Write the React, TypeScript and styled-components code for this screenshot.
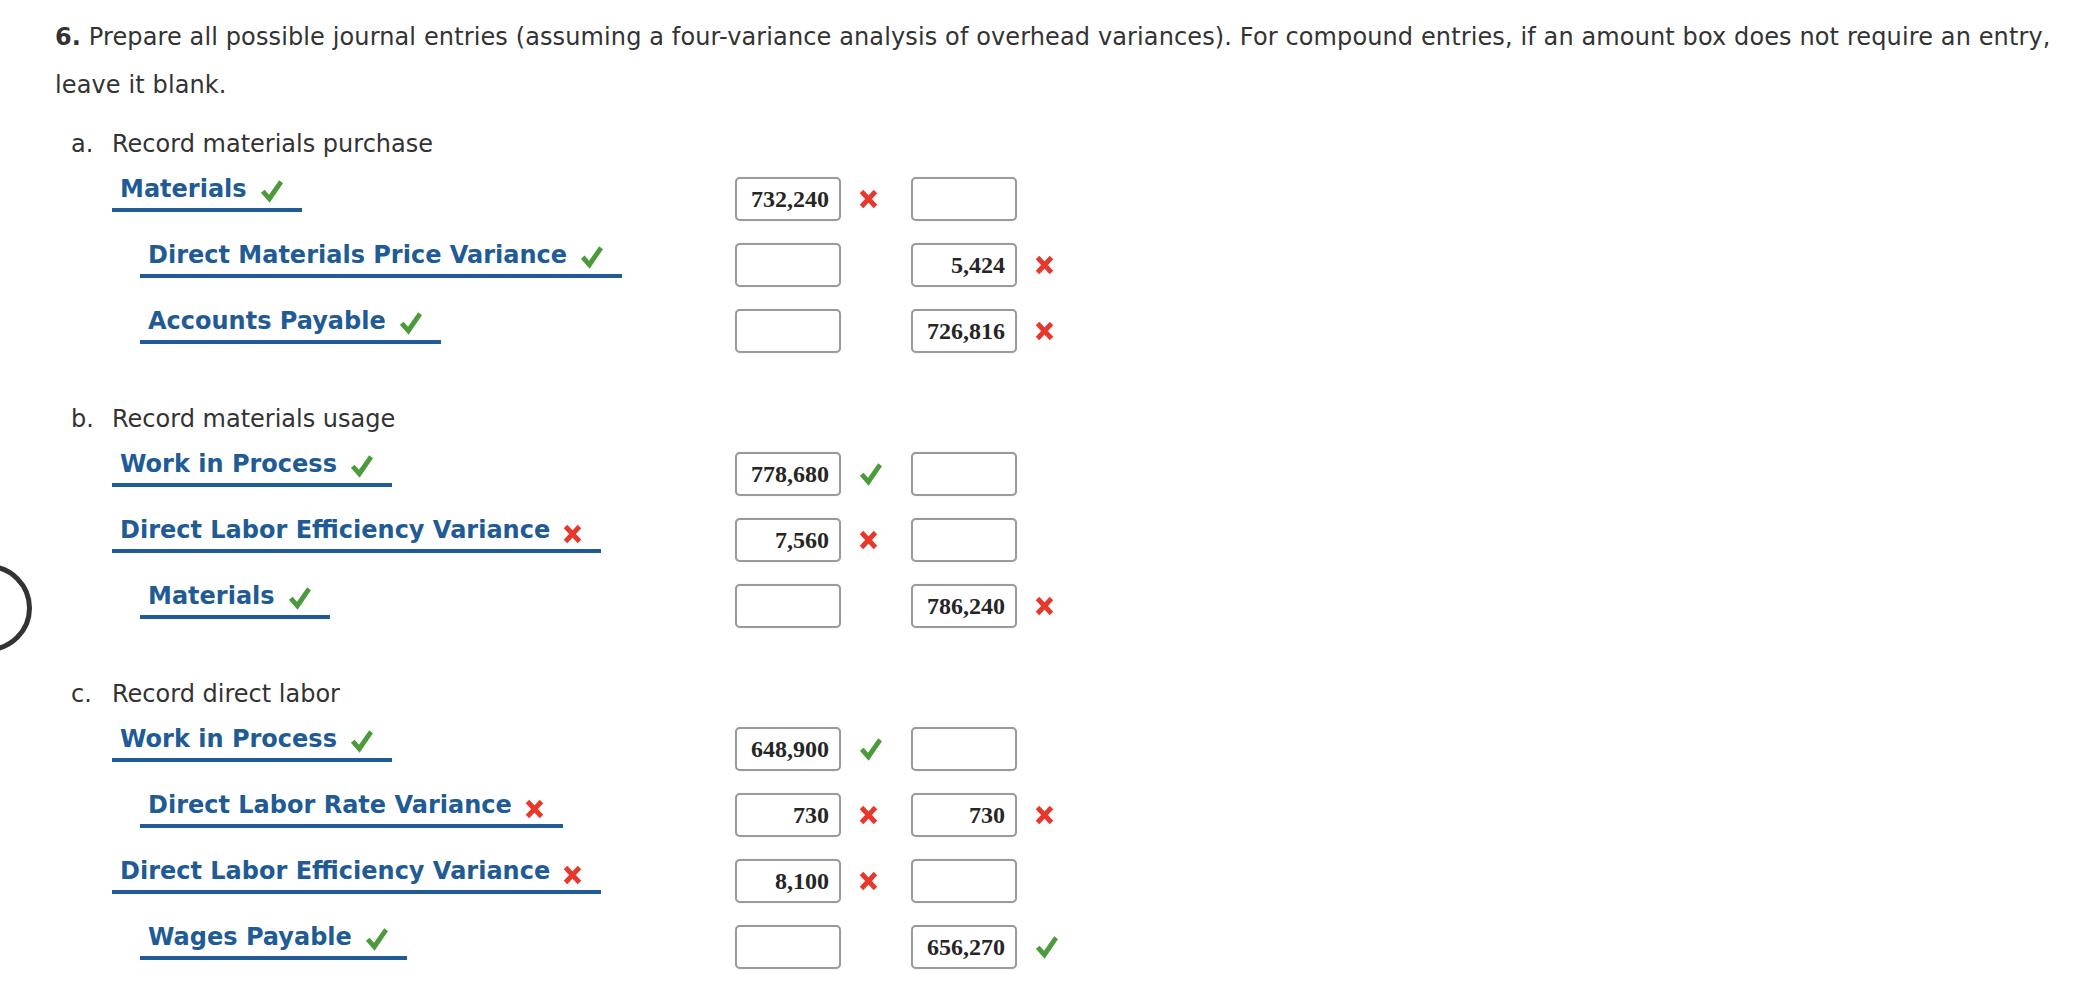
import React from 'react';
import styled, { createGlobalStyle } from 'styled-components';

const Global = createGlobalStyle`
  html, body { margin: 0; padding: 0; background: #fff; }
  body { font-family: "DejaVu Sans", Verdana, sans-serif; color: #333; }
`;

const Page = styled.div`
  position: relative;
  box-sizing: border-box;
  min-height: 992px;
  padding: 13px 30px 0 55px;
  overflow: hidden;
`;

const Prompt = styled.p`
  margin: 0;
  max-width: 2000px;
  font-size: 24px;
  line-height: 48px;
  letter-spacing: 0.12px;
  color: #333;
`;

const Num = styled.b`
  color: #333;
`;

const Section = styled.section`
  margin-top: 20px;
  padding-left: 16px;
  & + & { margin-top: 32px; }
`;

const SectionHead = styled.div`
  display: flex;
  font-size: 24px;
  line-height: 30px;
  color: #333;
`;

const Marker = styled.span`
  width: 41px;
  flex-shrink: 0;
`;

const Rows = styled.div`
  margin: 15px 0 0 41px;
`;

const Row = styled.div`
  display: flex;
  align-items: flex-start;
  height: 66px;
`;

const LabelCell = styled.div<{ $credit?: boolean }>`
  width: 623px;
  flex-shrink: 0;
  box-sizing: border-box;
  padding-left: ${p => (p.$credit ? 28 : 0)}px;
`;

const Label = styled.span`
  display: inline-flex;
  align-items: center;
  gap: 13px;
  padding: 0 19px 4px 8px;
  border-bottom: 4px solid #215b95;
  font-size: 24px;
  font-weight: bold;
  line-height: 30px;
  color: #215b95;
  white-space: nowrap;
`;

const Amount = styled.div`
  box-sizing: border-box;
  width: 106px;
  height: 44px;
  margin-top: 3px;
  padding-right: 10px;
  border: 2px solid #9a9a9a;
  border-radius: 5px;
  box-shadow: 0 0 1px rgba(0, 0, 0, 0.25);
  background: #fff;
  font-family: "Liberation Serif", "Times New Roman", serif;
  font-weight: bold;
  font-size: 24px;
  line-height: 40px;
  text-align: right;
  color: #262626;
  flex-shrink: 0;
`;

const MarkCell = styled.div`
  box-sizing: border-box;
  width: 70px;
  height: 44px;
  margin-top: 3px;
  padding-left: 18px;
  display: flex;
  align-items: center;
  flex-shrink: 0;
`;

const IconWrap = styled.span<{ $shift?: number }>`
  display: inline-flex;
  margin-top: ${p => p.$shift ?? 0}px;
`;

const Circle = styled.div`
  position: absolute;
  left: -56px;
  top: 564px;
  width: 88px;
  height: 88px;
  box-sizing: border-box;
  border: 5px solid #333;
  border-radius: 50%;
`;

type Mark = 'ok' | 'bad' | undefined;

const Check = ({ size = 24 }: { size?: number }) => (
  <svg width={size * 0.92} height={size} viewBox="0 0 22 24" aria-hidden>
    <path d="M0.8 13.2 L4.4 10.2 L8.6 15.2 L18.4 1.2 L22 4 L9.2 22.8 Z" fill="#4b9a3b" />
  </svg>
);

const Cross = ({ size = 19 }: { size?: number }) => (
  <svg width={size} height={size + 1} viewBox="0 0 19 20" aria-hidden>
    <path d="M2.5 2.5 L16.5 17.5 M16.5 2.5 L2.5 17.5" stroke="#e8382c" strokeWidth="4.8" strokeLinecap="butt" />
  </svg>
);

const MarkIcon = ({ mark }: { mark: Mark }) =>
  mark === 'ok' ? <Check size={25} /> : mark === 'bad' ? <Cross /> : null;

type Entry = {
  account: string;
  credit?: boolean;
  accountMark: Mark;
  debit?: string;
  debitMark?: Mark;
  creditAmt?: string;
  creditMark?: Mark;
};

type Part = { letter: string; title: string; entries: Entry[] };

const parts: Part[] = [
  {
    letter: 'a.',
    title: 'Record materials purchase',
    entries: [
      { account: 'Materials', accountMark: 'ok', debit: '732,240', debitMark: 'bad' },
      { account: 'Direct Materials Price Variance', credit: true, accountMark: 'ok', creditAmt: '5,424', creditMark: 'bad' },
      { account: 'Accounts Payable', credit: true, accountMark: 'ok', creditAmt: '726,816', creditMark: 'bad' },
    ],
  },
  {
    letter: 'b.',
    title: 'Record materials usage',
    entries: [
      { account: 'Work in Process', accountMark: 'ok', debit: '778,680', debitMark: 'ok' },
      { account: 'Direct Labor Efficiency Variance', accountMark: 'bad', debit: '7,560', debitMark: 'bad' },
      { account: 'Materials', credit: true, accountMark: 'ok', creditAmt: '786,240', creditMark: 'bad' },
    ],
  },
  {
    letter: 'c.',
    title: 'Record direct labor',
    entries: [
      { account: 'Work in Process', accountMark: 'ok', debit: '648,900', debitMark: 'ok' },
      { account: 'Direct Labor Rate Variance', credit: true, accountMark: 'bad', debit: '730', debitMark: 'bad', creditAmt: '730', creditMark: 'bad' },
      { account: 'Direct Labor Efficiency Variance', accountMark: 'bad', debit: '8,100', debitMark: 'bad' },
      { account: 'Wages Payable', credit: true, accountMark: 'ok', creditAmt: '656,270', creditMark: 'ok' },
    ],
  },
];

export default function App() {
  return (
    <>
      <Global />
      <Page>
        <Circle />
        <Prompt>
          <Num>6.</Num> Prepare all possible journal entries (assuming a four-variance analysis of overhead variances). For
          compound entries, if an amount box does not require an entry, leave it blank.
        </Prompt>
        {parts.map(part => (
          <Section key={part.letter}>
            <SectionHead>
              <Marker>{part.letter}</Marker>
              <span>{part.title}</span>
            </SectionHead>
            <Rows>
              {part.entries.map((e, i) => (
                <Row key={i}>
                  <LabelCell $credit={e.credit}>
                    <Label>
                      {e.account}
                      <IconWrap $shift={e.accountMark === 'bad' ? 8 : 4}>
                        {e.accountMark === 'ok' ? <Check size={25} /> : <Cross size={19} />}
                      </IconWrap>
                    </Label>
                  </LabelCell>
                  <Amount>{e.debit ?? ''}</Amount>
                  <MarkCell>
                    <MarkIcon mark={e.debitMark} />
                  </MarkCell>
                  <Amount>{e.creditAmt ?? ''}</Amount>
                  <MarkCell>
                    <MarkIcon mark={e.creditMark} />
                  </MarkCell>
                </Row>
              ))}
            </Rows>
          </Section>
        ))}
      </Page>
    </>
  );
}
